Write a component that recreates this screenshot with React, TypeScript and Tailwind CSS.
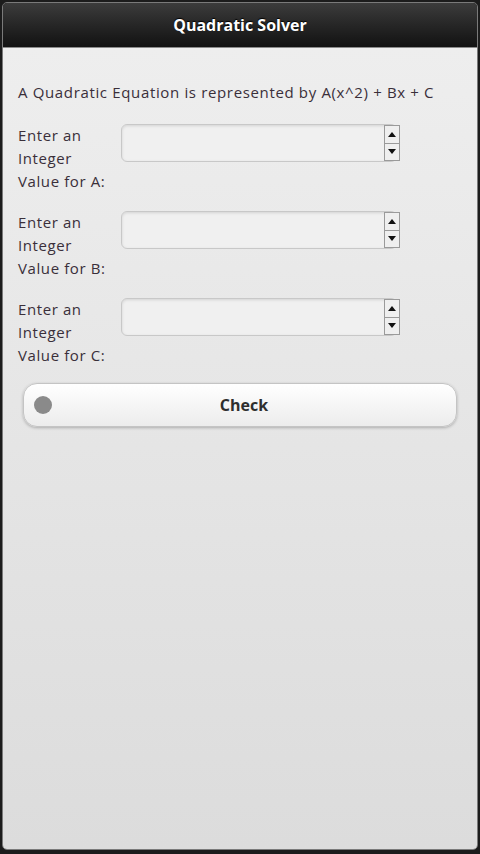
import React from "react";

function Spinner() {
  return (
    <div className="absolute right-[-3px] top-[1px] flex h-[36px] w-[16px] flex-col border border-[#9a9a9a] bg-[#efefef]">
      <div className="flex flex-1 items-center justify-center border-b border-[#9a9a9a]">
        <svg width="8" height="5" viewBox="0 0 8 5"><polygon points="4,0 8,5 0,5" fill="#111" /></svg>
      </div>
      <div className="flex flex-1 items-center justify-center">
        <svg width="8" height="5" viewBox="0 0 8 5"><polygon points="0,0 8,0 4,5" fill="#111" /></svg>
      </div>
    </div>
  );
}

function Row({ letter }: { letter: string }) {
  return (
    <div className="flex items-start">
      <div className="w-[103px] text-[15px] leading-[23px] tracking-[0.6px] text-[#3a2f3a]">
        Enter an
        <br />
        Integer
        <br />
        Value for {letter}:
      </div>
      <div className="relative h-[38px] w-[276px]">
        <div className="h-full w-full rounded-[6px] border border-[#c8c8c8] bg-[#f0f0f0] shadow-[inset_0_1px_3px_rgba(0,0,0,0.12)]" />
        <Spinner />
      </div>
    </div>
  );
}

export default function App() {
  return (
    <div
      className="h-[854px] w-[480px] overflow-hidden bg-[#1c1c1c] px-[2px] pb-[4px] pt-[2px]"
      style={{ fontFamily: '"Open Sans", "DejaVu Sans", sans-serif' }}
    >
      <div className="flex h-full flex-col overflow-hidden rounded-[5px] border border-[#7a7a7a]">
        <div className="flex h-[45px] items-center justify-center border-b border-[#8a8a8a] bg-gradient-to-b from-[#3c3c3c] to-[#121212]">
          <span className="text-[16px] font-bold text-white [text-shadow:0_-1px_1px_#000]">Quadratic Solver</span>
        </div>
        <div className="flex flex-1 flex-col bg-gradient-to-b from-[#eeeeee] to-[#dcdcdc] px-[15px] pt-[34px]">
          <p className="whitespace-nowrap text-[15px] leading-[20px] tracking-[0.65px] text-[#3a2f3a]">
            A Quadratic Equation is represented by A(x^2) + Bx + C
          </p>
          <div className="mt-[22px] flex flex-col gap-[18px]">
            <Row letter="A" />
            <Row letter="B" />
            <Row letter="C" />
          </div>
          <button className="mx-[5px] mt-[16px] flex h-[44px] items-center rounded-[14px] border border-[#c4c4c4] bg-gradient-to-b from-[#ffffff] to-[#ececec] px-[10px] shadow-[0_1px_3px_rgba(0,0,0,0.25)]">
            <span className="h-[18px] w-[18px] rounded-full bg-[#8a8a8a]" />
            <span className="flex-1 pr-[10px] text-center text-[16px] font-bold text-[#2e2e2e]">Check</span>
          </button>
        </div>
      </div>
    </div>
  );
}
